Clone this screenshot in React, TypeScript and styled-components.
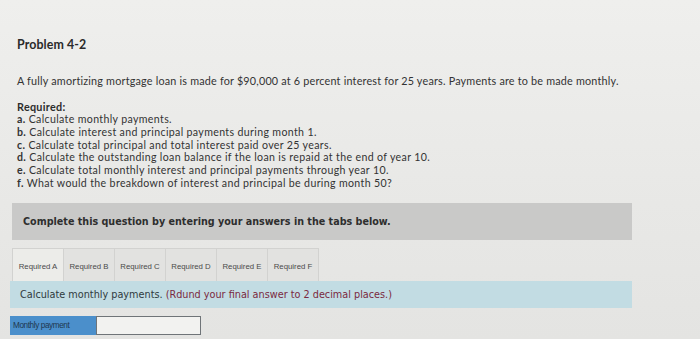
import * as React from 'react'
import styled, { createGlobalStyle } from 'styled-components'

const GlobalStyle = createGlobalStyle`
  html, body {
    margin: 0;
    padding: 0;
    background: #e8e8e6;
  }
  body {
    font-family: Lato, 'Open Sans', 'Liberation Sans', sans-serif;
    color: #2b2b2b;
  }
`

const tabs = ['Required A', 'Required B', 'Required C', 'Required D', 'Required E', 'Required F']

const requirements = [
  ['a.', 'Calculate monthly payments.'],
  ['b.', 'Calculate interest and principal payments during month 1.'],
  ['c.', 'Calculate total principal and total interest paid over 25 years.'],
  ['d.', 'Calculate the outstanding loan balance if the loan is repaid at the end of year 10.'],
  ['e.', 'Calculate total monthly interest and principal payments through year 10.'],
  ['f.', 'What would the breakdown of interest and principal be during month 50?'],
]

const App: React.FC = () => {
  const [active, setActive] = React.useState(0)

  return (
    <React.Fragment>
      <GlobalStyle />
      <Page>
        <Title>Problem 4-2</Title>
        <Intro>
          A fully amortizing mortgage loan is made for $90,000 at 6 percent interest for 25 years. Payments are to be
          made monthly.
        </Intro>
        <RequiredHeading>Required:</RequiredHeading>
        <ReqList>
          {requirements.map(([letter, text]) => (
            <li key={letter}>
              <b>{letter}</b> {text}
            </li>
          ))}
        </ReqList>

        <Instructions>Complete this question by entering your answers in the tabs below.</Instructions>

        <TabRow>
          {tabs.map((t, i) => (
            <Tab key={t} active={i === active} onClick={() => setActive(i)}>
              {t}
            </Tab>
          ))}
        </TabRow>
        <Prompt>
          Calculate monthly payments. <Hint>(Rdund your final answer to 2 decimal places.)</Hint>
        </Prompt>
        <AnswerRow>
          <AnswerLabel>Monthly payment</AnswerLabel>
          <AnswerInput />
        </AnswerRow>
      </Page>
    </React.Fragment>
  )
}

const Page = styled.div`
  width: 700px;
  height: 339px;
  overflow: hidden;
  padding: 37px 0 0 17px;
  box-sizing: border-box;
  background: linear-gradient(180deg, #efefed 0%, #e8e8e6 60%, #e4e4e2 100%);
`

const Title = styled.h1`
  margin: 0;
  font-size: 12.4px;
  font-weight: 700;
  letter-spacing: 0.1px;
  color: #2a2a2a;
  line-height: 16px;
`

const Intro = styled.p`
  margin: 21px 0 0;
  font-size: 10.8px;
  letter-spacing: 0.2px;
  line-height: 14px;
  color: #333;
`

const RequiredHeading = styled.div`
  margin-top: 12px;
  font-size: 10.8px;
  font-weight: 700;
  letter-spacing: 0.3px;
  line-height: 13px;
  color: #2c2c2c;
`

const ReqList = styled.ul`
  list-style: none;
  margin: 0;
  padding: 0;
  font-size: 10.6px;
  letter-spacing: 0.35px;
  line-height: 12.8px;
  color: #333;

  b {
    font-weight: 700;
  }
`

const Instructions = styled.div`
  margin: 13px 0 0 -5px;
  width: 620px;
  height: 37px;
  box-sizing: border-box;
  padding: 0 0 0 11px;
  display: flex;
  align-items: center;
  background: #c9c9c8;
  font-family: 'DejaVu Sans', Verdana, sans-serif;
  font-size: 9.6px;
  font-weight: 700;
  color: #2e2e2e;
`

const TabRow = styled.div`
  display: flex;
  margin: 8px 0 0 -5px;
`

const Tab = styled.div<{ active: boolean }>`
  width: 52px;
  height: 33px;
  box-sizing: border-box;
  display: flex;
  align-items: center;
  justify-content: center;
  padding-top: 3px;
  border: 1px solid #d2d2d0;
  border-bottom: none;
  margin-right: -1px;
  background: ${(p) => (p.active ? '#ecece9' : '#e2e2e0')};
  font-family: 'Liberation Sans', Arial, sans-serif;
  font-size: 7.8px;
  color: #4a4a4a;
  cursor: pointer;
`

const Prompt = styled.div`
  margin: 0 0 0 -7px;
  width: 622px;
  height: 27px;
  box-sizing: border-box;
  padding-left: 10px;
  display: flex;
  align-items: center;
  background: #c2dce3;
  font-family: 'DejaVu Sans', Verdana, sans-serif;
  font-size: 9.7px;
  color: #2f3a3e;
  white-space: pre;
`

const Hint = styled.span`
  color: #7a2940;
`

const AnswerRow = styled.div`
  display: flex;
  margin: 8px 0 0 -7px;
  height: 19px;
`

const AnswerLabel = styled.div`
  width: 86px;
  box-sizing: border-box;
  padding-left: 3px;
  display: flex;
  align-items: center;
  background: #4b8fcb;
  color: #203850;
  font-family: 'Liberation Sans', Arial, sans-serif;
  font-size: 8.2px;
  letter-spacing: -0.4px;
`

const AnswerInput = styled.input`
  width: 105px;
  height: 19px;
  box-sizing: border-box;
  border: 1.5px solid #6f7478;
  background: #f2f2f0;
  outline: none;
  padding: 0 4px;
`

export default App
